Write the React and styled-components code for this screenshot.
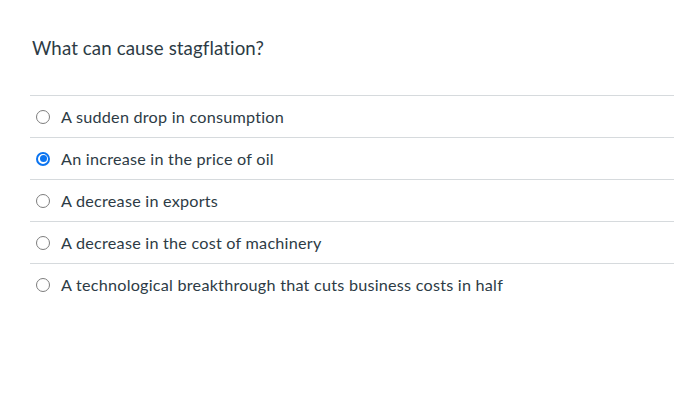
import React from "react";
import styled, { createGlobalStyle } from "styled-components";

const Global = createGlobalStyle`
  html, body { margin: 0; padding: 0; background: #fff; }
  body { font-family: Lato, "Helvetica Neue", Arial, sans-serif; color: #2d3b45; }
`;

const Page = styled.div`
  width: 674px;
  height: 411px;
  padding: 35px 0 0 30px;
  box-sizing: border-box;
`;

const Question = styled.h2`
  margin: 0 0 34px 2px;
  font-size: 18.7px;
  letter-spacing: 0.1px;
  font-weight: 400;
  line-height: 26px;
  color: #2d3b45;
`;

const List = styled.div`
  display: flex;
  flex-direction: column;
`;

const Row = styled.label`
  display: flex;
  align-items: center;
  gap: 11px;
  height: 42px;
  box-sizing: border-box;
  border-top: 1px solid #d6dadd;
  padding: 0 0 0 6px;
  font-size: 16.2px;
  letter-spacing: 0.23px;
  color: #2d3b45;
`;

const Radio = styled.span`
  width: 14px;
  height: 14px;
  box-sizing: border-box;
  border-radius: 50%;
  border: ${p => (p.$checked ? "2px solid #0b74f0" : "1px solid #7d7d7d")};
  display: flex;
  align-items: center;
  justify-content: center;
  flex-shrink: 0;
  &::after {
    content: "";
    display: ${p => (p.$checked ? "block" : "none")};
    width: 7px;
    height: 7px;
    border-radius: 50%;
    background: #0b74f0;
  }
`;

const options = [
  "A sudden drop in consumption",
  "An increase in the price of oil",
  "A decrease in exports",
  "A decrease in the cost of machinery",
  "A technological breakthrough that cuts business costs in half",
];

export default function App() {
  return (
    <>
      <Global />
      <Page>
        <Question>What can cause stagflation?</Question>
        <List>
          {options.map((o, i) => (
            <Row key={o}>
              <Radio $checked={i === 1} />
              {o}
            </Row>
          ))}
        </List>
      </Page>
    </>
  );
}
